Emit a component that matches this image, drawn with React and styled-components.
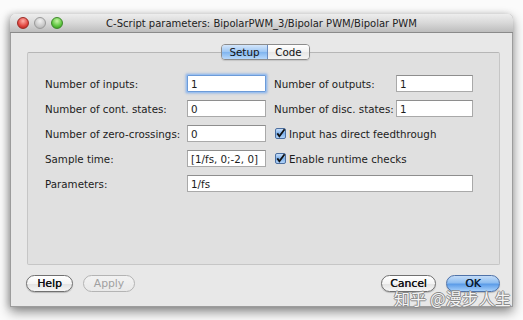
import styled, { createGlobalStyle } from 'styled-components'

const GlobalStyle = createGlobalStyle`
  html, body {
    margin: 0;
    padding: 0;
    background: #fbfbfb;
    width: 523px;
    height: 320px;
    overflow: hidden;
  }
  body {
    font-family: "DejaVu Sans", "Noto Sans CJK SC", sans-serif;
    color: #1c1c1c;
  }
`

const Page = styled.div`
  position: relative;
  width: 523px;
  height: 320px;
  padding: 14px 10px 0 10px;
  box-sizing: border-box;
`

const Window = styled.div`
  width: 503px;
  height: 293px;
  box-sizing: border-box;
  background: #e8e8e8;
  border: 1px solid #9c9c9c;
  border-top: none;
  border-radius: 5px 5px 0 0;
  box-shadow: 0 5px 12px rgba(0, 0, 0, 0.45), -2px 0 6px rgba(0, 0, 0, 0.15);
  display: flex;
  flex-direction: column;
`

const TitleBar = styled.div`
  height: 18px;
  display: grid;
  grid-template-columns: 70px 1fr 70px;
  align-items: center;
  background: linear-gradient(#eeeeee, #d8d8d8 50%, #bdbdbd);
  border-bottom: 1px solid #8a8a8a;
  border-radius: 5px 5px 0 0;
  margin: 0 -1px;
`

const Lights = styled.div`
  display: flex;
  gap: 5px;
  padding-left: 7px;
`

const Light = styled.span`
  width: 12px;
  height: 12px;
  border-radius: 50%;
  box-sizing: border-box;
  border: 1px solid ${(p) => p.edge};
  background: radial-gradient(circle at 50% 30%, ${(p) => p.hi}, ${(p) => p.c} 60%, ${(p) => p.lo});
`

const Title = styled.div`
  text-align: center;
  font-size: 10px;
  color: #222;
  white-space: nowrap;
`

const Body = styled.div`
  flex: 1;
  display: flex;
  flex-direction: column;
  padding: 11px 12px 0 16px;
`

const Tabs = styled.div`
  align-self: center;
  display: flex;
  height: 16px;
  margin-bottom: -8px;
  position: relative;
  z-index: 1;
  margin-left: 4px;
  border: 1px solid #8c8c8c;
  border-radius: 4px;
  overflow: hidden;
  box-sizing: border-box;
  box-shadow: 0 1px 1px rgba(0, 0, 0, 0.12);
`

const Tab = styled.div`
  display: flex;
  align-items: center;
  justify-content: center;
  width: ${(p) => p.w}px;
  font-size: 10.3px;
  color: #111;
  background: ${(p) =>
    p.active
      ? 'linear-gradient(#d4e6fb, #9cc6f3 50%, #7fb4ee 51%, #b7d8fb)'
      : 'linear-gradient(#ffffff, #f1f1f1 50%, #e6e6e6 51%, #f4f4f4)'};
  border-right: ${(p) => (p.active ? '1px solid #6a8cc0' : 'none')};
`

const Panel = styled.div`
  height: 213px;
  box-sizing: border-box;
  background: #e0e0e0;
  border: 1px solid #c6c6c6;
  border-top-color: #b6b6b6;
  border-radius: 2px;
  padding: 22px 0 0 17px;
`

const Form = styled.div`
  display: grid;
  grid-template-columns: 142px 79px 130px 77px;
  grid-auto-rows: 17px;
  row-gap: 8px;
  align-items: center;
  font-size: 10.3px;
`

const Label = styled.div`
  padding-left: ${(p) => (p.right ? 8 : 0)}px;
  white-space: nowrap;
`

const Field = styled.div`
  height: 17px;
  box-sizing: border-box;
  grid-column: ${(p) => p.span || 'auto'};
  background: #fff;
  border: 1px solid #a9a9a9;
  border-top-color: #8e8e8e;
  padding: 0 3px;
  display: flex;
  align-items: center;
  font-size: 10.3px;
  white-space: nowrap;
  overflow: hidden;
  ${(p) =>
    p.focus &&
    `
    border: 1px solid #6c9bd8;
    box-shadow: 0 0 0 1px #9cc0ee, 0 0 2px 2px rgba(110, 160, 230, 0.45);
    border-radius: 1px;
  `}
`

const Check = styled.label`
  grid-column: 3 / 5;
  padding-left: 9px;
  display: flex;
  align-items: center;
  gap: 3px;
  white-space: nowrap;
`

const Buttons = styled.div`
  display: flex;
  align-items: center;
  margin-top: 10px;
  margin-left: -1px;
  gap: 10px;
`

const Spacer = styled.div`
  flex: 1;
`

const Button = styled.div`
  width: ${(p) => p.w}px;
  height: 17px;
  box-sizing: border-box;
  border-radius: 9px;
  display: flex;
  align-items: center;
  justify-content: center;
  font-size: 10.8px;
  color: ${(p) => (p.disabled ? '#a0a0a0' : p.primary ? '#0c1c33' : '#111')};
  text-shadow: ${(p) => (p.disabled ? 'none' : '0.3px 0 0 currentColor')};
  border: 1px solid ${(p) => (p.primary ? '#4f72a8' : p.disabled ? '#b4b4b4' : '#707070')};
  background: ${(p) =>
    p.primary
      ? 'linear-gradient(#c3dcf8, #8ebdf0 45%, #5c9ce8 55%, #a6d0fb)'
      : p.disabled
      ? 'linear-gradient(#f2f2f2, #e9e9e9)'
      : 'linear-gradient(#ffffff, #f4f4f4 50%, #e4e4e4 55%, #f6f6f6)'};
  box-shadow: ${(p) => (p.disabled ? 'none' : '0 1px 1px rgba(0,0,0,0.2)')};
`

const Watermark = styled.div`
  position: absolute;
  right: 12px;
  bottom: 13px;
  font-family: "Noto Sans CJK SC", sans-serif;
  font-size: 16px;
  line-height: 18px;
  color: rgba(255, 255, 255, 0.92);
  text-shadow: 1px 0 0 #8a8a8a, -1px 0 0 #8a8a8a, 0 1px 0 #8a8a8a, 0 -1px 0 #8a8a8a;
  letter-spacing: 0.3px;
  white-space: nowrap;
`

function CheckBox() {
  return (
    <svg width="11" height="11" viewBox="0 0 11 11">
      <defs>
        <linearGradient id="cb" x1="0" y1="0" x2="0" y2="1">
          <stop offset="0" stopColor="#cfe3fb" />
          <stop offset="0.5" stopColor="#7fb2ec" />
          <stop offset="1" stopColor="#b6d6fa" />
        </linearGradient>
      </defs>
      <rect x="0.5" y="0.5" width="10" height="10" rx="1.5" fill="url(#cb)" stroke="#4d6f9f" />
      <path d="M2.3 5.4 L4.4 8.2 L9.6 1.2" fill="none" stroke="#111" strokeWidth="1.8" />
    </svg>
  )
}

const fields = [
  { label: 'Number of inputs:', value: '1' },
  { label: 'Number of cont. states:', value: '0' },
  { label: 'Number of zero-crossings:', value: '0' },
  { label: 'Sample time:', value: '[1/fs, 0;-2, 0]' },
]

export default function App() {
  return (
    <Page>
      <GlobalStyle />
      <Window>
        <TitleBar>
          <Lights>
            <Light c="#e0443e" hi="#ffb0a8" lo="#a51c17" edge="#9c2a24" />
            <Light c="#c9c9c9" hi="#f2f2f2" lo="#a9a9a9" edge="#9a9a9a" />
            <Light c="#5cc43e" hi="#c8f6a8" lo="#2f8a1c" edge="#3e8a2a" />
          </Lights>
          <Title>C-Script parameters: BipolarPWM_3/Bipolar PWM/Bipolar PWM</Title>
          <div />
        </TitleBar>
        <Body>
          <Tabs>
            <Tab w={45} active>
              Setup
            </Tab>
            <Tab w={41}>Code</Tab>
          </Tabs>
          <Panel>
            <Form>
              <Label>{fields[0].label}</Label>
              <Field focus>{fields[0].value}</Field>
              <Label right>Number of outputs:</Label>
              <Field>1</Field>

              <Label>{fields[1].label}</Label>
              <Field>{fields[1].value}</Field>
              <Label right>Number of disc. states:</Label>
              <Field>1</Field>

              <Label>{fields[2].label}</Label>
              <Field>{fields[2].value}</Field>
              <Check>
                <CheckBox />
                Input has direct feedthrough
              </Check>

              <Label>{fields[3].label}</Label>
              <Field>{fields[3].value}</Field>
              <Check>
                <CheckBox />
                Enable runtime checks
              </Check>

              <Label>Parameters:</Label>
              <Field span="2 / 5">1/fs</Field>
            </Form>
          </Panel>
          <Buttons>
            <Button w={47}>Help</Button>
            <Button w={52} disabled>
              Apply
            </Button>
            <Spacer />
            <Button w={55}>Cancel</Button>
            <Button w={54} primary>
              OK
            </Button>
          </Buttons>
        </Body>
      </Window>
      <Watermark>知乎 @漫步人生</Watermark>
    </Page>
  )
}
